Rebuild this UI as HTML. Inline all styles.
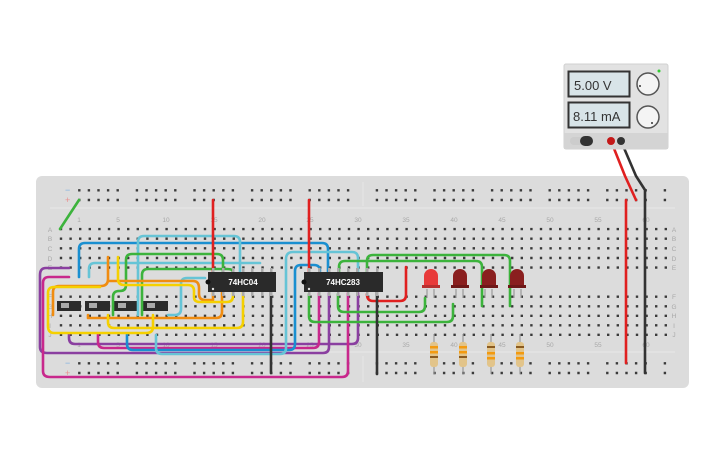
<!DOCTYPE html>
<html><head><meta charset="utf-8"><style>
html,body{margin:0;padding:0;background:#fff;width:725px;height:453px;overflow:hidden}
svg{display:block}
text{font-family:"Liberation Sans",sans-serif}
</style></head><body>
<svg width="725" height="453" viewBox="0 0 725 453" xmlns="http://www.w3.org/2000/svg">
<!-- board -->
<rect x="36" y="176" width="653" height="212" rx="6" fill="#dcdcdc"/>
<line x1="50" y1="208" x2="675" y2="208" stroke="#e8e8e8" stroke-width="1"/>
<line x1="50" y1="352" x2="675" y2="352" stroke="#e8e8e8" stroke-width="1"/>
<line x1="363" y1="182" x2="363" y2="206" stroke="#e6e6e6"/>
<line x1="363" y1="356" x2="363" y2="382" stroke="#e6e6e6"/>
<!-- rails -->
<g stroke="#3a3a3a" stroke-width="2.4" stroke-dasharray="2.4 7.2 2.4 7.2 2.4 7.2 2.4 7.2 2.4 16.8">
<line x1="78.1" y1="190.3" x2="363" y2="190.3"/><line x1="78.1" y1="200" x2="363" y2="200"/>
<line x1="78.1" y1="363.3" x2="363" y2="363.3"/><line x1="78.1" y1="373" x2="363" y2="373"/>
<line x1="375.7" y1="190.3" x2="667" y2="190.3"/><line x1="375.7" y1="200" x2="667" y2="200"/>
<line x1="375.7" y1="363.3" x2="667" y2="363.3"/><line x1="375.7" y1="373" x2="667" y2="373"/>
</g>
<text x="65" y="193" font-size="9" fill="#7fb0e0">−</text>
<text x="65" y="203" font-size="9" fill="#e89090">+</text>
<text x="65" y="366" font-size="9" fill="#7fb0e0">−</text>
<text x="65" y="376" font-size="9" fill="#e89090">+</text>
<!-- main holes -->
<g stroke="#3a3a3a" stroke-width="2.4" stroke-dasharray="2.4 7.2">
<line x1="59.8" y1="229.1" x2="668" y2="229.1"/><line x1="59.8" y1="238.7" x2="668" y2="238.7"/><line x1="59.8" y1="248.3" x2="668" y2="248.3"/><line x1="59.8" y1="258" x2="668" y2="258"/><line x1="59.8" y1="267.6" x2="668" y2="267.6"/>
<line x1="59.8" y1="296.7" x2="668" y2="296.7"/><line x1="59.8" y1="306.3" x2="668" y2="306.3"/><line x1="59.8" y1="315.8" x2="668" y2="315.8"/><line x1="59.8" y1="325.3" x2="668" y2="325.3"/><line x1="59.8" y1="334.8" x2="668" y2="334.8"/>
</g>
<!-- labels -->
<g font-size="6.5" fill="#a8a8a8" text-anchor="middle">
<text x="79" y="222">1</text><text x="118" y="222">5</text><text x="166" y="222">10</text><text x="214" y="222">15</text><text x="262" y="222">20</text><text x="310" y="222">25</text><text x="358" y="222">30</text><text x="406" y="222">35</text><text x="454" y="222">40</text><text x="502" y="222">45</text><text x="550" y="222">50</text><text x="598" y="222">55</text><text x="646" y="222">60</text>
<text x="79" y="347">1</text><text x="118" y="347">5</text><text x="166" y="347">10</text><text x="214" y="347">15</text><text x="262" y="347">20</text><text x="310" y="347">25</text><text x="358" y="347">30</text><text x="406" y="347">35</text><text x="454" y="347">40</text><text x="502" y="347">45</text><text x="550" y="347">50</text><text x="598" y="347">55</text><text x="646" y="347">60</text>
<text x="50" y="232">A</text><text x="50" y="241">B</text><text x="50" y="251">C</text><text x="50" y="261">D</text><text x="50" y="270">E</text>
<text x="50" y="299">F</text><text x="50" y="309">G</text><text x="50" y="318">H</text><text x="50" y="328">I</text><text x="50" y="337">J</text>
<text x="674" y="232">A</text><text x="674" y="241">B</text><text x="674" y="251">C</text><text x="674" y="261">D</text><text x="674" y="270">E</text>
<text x="674" y="299">F</text><text x="674" y="309">G</text><text x="674" y="318">H</text><text x="674" y="328">I</text><text x="674" y="337">J</text>
</g>
<!-- switches -->
<g>
<rect x="57" y="301" width="24" height="10" fill="#2b2b2b"/><rect x="61" y="303" width="8" height="5" fill="#aaa"/>
<rect x="85" y="301" width="25" height="10" fill="#2b2b2b"/><rect x="89" y="303" width="8" height="5" fill="#aaa"/>
<rect x="114" y="301" width="25" height="10" fill="#2b2b2b"/><rect x="118" y="303" width="8" height="5" fill="#aaa"/>
<rect x="143" y="301" width="25" height="10" fill="#2b2b2b"/><rect x="147" y="303" width="8" height="5" fill="#aaa"/>
</g>
<!-- wires -->
<g fill="none" stroke-width="2.6" stroke-linecap="round" stroke-linejoin="round">
<path stroke="#8a3fa0" d="M69 268 H46 Q40 268 40 275 V347 Q40 353 47 353 H323 Q329 353 329 347 V293"/>
<path stroke="#8a3fa0" d="M69 334 V338 Q69 344 75 344 H352 Q358 344 358 338 V293"/>
<path stroke="#c8288c" d="M69 277 H49 Q43 277 43 283 V371 Q43 377 50 377 H342 Q348 377 348 371 V293"/>
<path stroke="#c8288c" d="M98 334 V342 Q98 348 104 348 H313 Q319 348 319 342 V293"/>
<path stroke="#1a8fd0" d="M79 277 V249 Q79 243 85 243 H322 Q328 243 328 249 V272"/>
<path stroke="#1a8fd0" d="M127 334 V344 Q127 350 133 350 H289 Q295 350 295 344 V271 Q295 265 301 265 H314 Q320 265 320 271"/>
<path stroke="#66c4d6" d="M138 315 V242 Q138 236 144 236 H234 Q240 236 240 242 V272"/>
<path stroke="#66c4d6" d="M89 277 V269 Q89 263 95 263 H260"/>
<path stroke="#66c4d6" d="M168 315 H175 Q181 315 181 309 V284 Q181 278 187 278 H205"/>
<path stroke="#66c4d6" d="M156 335 V348 Q156 354 162 354 H280 Q286 354 286 348 V259 Q286 252 293 252 H352 Q358 252 358 258 V272"/>
<path stroke="#3cb33c" d="M60 229 L79 200"/>
<path stroke="#3cb33c" d="M113 315 V297 Q113 291 119 291 H120 Q126 291 126 285 V260 Q126 254 132 254 H217 Q223 254 223 260 V272"/>
<path stroke="#3cb33c" d="M142 315 V275 Q142 269 148 269 H227 Q233 269 233 272"/>
<path stroke="#3cb33c" d="M367 272 V261 Q367 255 373 255 H504 Q510 255 510 261 V306"/>
<path stroke="#3cb33c" d="M339 272 V267 Q339 261 345 261 H476 Q482 261 482 267 V306"/>
<path stroke="#3cb33c" d="M309 294 V316 Q309 322 315 322 H447 Q453 322 453 316 V304"/>
<path stroke="#3cb33c" d="M338 294 V306 Q338 312 344 312 H419 Q425 312 425 306 V298"/>
<path stroke="#e02020" d="M406 267 V295 Q406 301 400 301 H373 Q367 301 367 294"/>
<path stroke="#e02020" d="M213 200 V272"/>
<path stroke="#e02020" d="M309 200 V272"/>
<path stroke="#f08c10" d="M108 257 V279 Q108 286 101 286 H59 Q53 286 53 292 V315"/>
<path stroke="#f08c10" d="M108 281 H193 Q199 281 199 288 V294 Q199 300 205 300 H213 V292"/>
<path stroke="#f08c10" d="M88 315 V318 H216 Q222 318 222 312 V292"/>
<path stroke="#f5d000" d="M118 257 V279 Q118 285 124 285 H188 Q194 285 194 291 V297 Q194 302 200 302 H227 Q233 302 233 296 V292"/>
<path stroke="#f5d000" d="M153 315 V327 Q153 333 146 333 H54 Q48 333 48 326 V293 Q48 287 54 287 H100"/>
<path stroke="#f5d000" d="M108 315 V322 Q108 328 114 328 H237 Q243 328 243 322 V292"/>
<path stroke="#333" d="M271 292 V373"/>
<path stroke="#333" d="M377 292 V374"/>
<path stroke="#e02020" d="M626 200 V363"/>
<path stroke="#e02020" d="M611 141 L625 176 L636 200"/>
<path stroke="#333" d="M621 141 L636 176 L645 190 V373"/>
</g>
<!-- chips -->
<g fill="#aaa">
<rect x="212" y="268" width="2.5" height="4"/><rect x="222" y="268" width="2.5" height="4"/><rect x="232" y="268" width="2.5" height="4"/><rect x="242" y="268" width="2.5" height="4"/><rect x="251" y="268" width="2.5" height="4"/><rect x="261" y="268" width="2.5" height="4"/><rect x="270" y="268" width="2.5" height="4"/>
<rect x="212" y="292" width="2.5" height="4"/><rect x="222" y="292" width="2.5" height="4"/><rect x="232" y="292" width="2.5" height="4"/><rect x="242" y="292" width="2.5" height="4"/><rect x="251" y="292" width="2.5" height="4"/><rect x="261" y="292" width="2.5" height="4"/><rect x="270" y="292" width="2.5" height="4"/>
<rect x="308" y="268" width="2.5" height="4"/><rect x="318" y="268" width="2.5" height="4"/><rect x="328" y="268" width="2.5" height="4"/><rect x="337" y="268" width="2.5" height="4"/><rect x="347" y="268" width="2.5" height="4"/><rect x="356" y="268" width="2.5" height="4"/><rect x="366" y="268" width="2.5" height="4"/><rect x="376" y="268" width="2.5" height="4"/>
<rect x="308" y="292" width="2.5" height="4"/><rect x="318" y="292" width="2.5" height="4"/><rect x="328" y="292" width="2.5" height="4"/><rect x="337" y="292" width="2.5" height="4"/><rect x="347" y="292" width="2.5" height="4"/><rect x="356" y="292" width="2.5" height="4"/><rect x="366" y="292" width="2.5" height="4"/><rect x="376" y="292" width="2.5" height="4"/>
</g>
<rect x="208" y="272" width="68" height="20" fill="#2a2a2a"/>
<circle cx="208" cy="282" r="2.5" fill="#111"/><circle cx="213" cy="289" r="1.2" fill="#ddd"/>
<text x="243" y="285" font-family="Liberation Mono,monospace" font-size="8" font-weight="bold" fill="#fff" text-anchor="middle">74HC04</text>
<rect x="304" y="272" width="79" height="20" fill="#2a2a2a"/>
<circle cx="304" cy="282" r="2.5" fill="#111"/><circle cx="309" cy="289" r="1.2" fill="#ddd"/>
<text x="343" y="285" font-family="Liberation Mono,monospace" font-size="8" font-weight="bold" fill="#fff" text-anchor="middle">74HC283</text>
<!-- LEDs -->
<g stroke="#999" stroke-width="1.2">
<line x1="427" y1="289" x2="427" y2="298"/><line x1="434" y1="289" x2="434" y2="298"/>
<line x1="456" y1="289" x2="456" y2="298"/><line x1="463" y1="289" x2="463" y2="298"/>
<line x1="485" y1="289" x2="485" y2="298"/><line x1="492" y1="289" x2="492" y2="298"/>
<line x1="514" y1="289" x2="514" y2="298"/><line x1="521" y1="289" x2="521" y2="298"/>
</g>
<path d="M424 287 V276 A7 7 0 0 1 438 276 V287 Z" fill="#e83a3a"/><rect x="422" y="285" width="18" height="3" fill="#b83030"/>
<path d="M453 287 V276 A7 7 0 0 1 467 276 V287 Z" fill="#8a1f1f"/><rect x="451" y="285" width="18" height="3" fill="#6e1818"/>
<path d="M482 287 V276 A7 7 0 0 1 496 276 V287 Z" fill="#8a1f1f"/><rect x="480" y="285" width="18" height="3" fill="#6e1818"/>
<path d="M510 287 V276 A7 7 0 0 1 524 276 V287 Z" fill="#8a1f1f"/><rect x="508" y="285" width="18" height="3" fill="#6e1818"/>
<!-- resistors -->
<g stroke="#999" stroke-width="1.2">
<line x1="434" y1="334" x2="434" y2="374"/><line x1="463" y1="334" x2="463" y2="374"/><line x1="491" y1="334" x2="491" y2="374"/><line x1="520" y1="334" x2="520" y2="374"/>
</g>
<g>
<rect x="430" y="342" width="8" height="25" rx="3" fill="#e2c48a"/><rect x="430" y="346" width="8" height="2.5" fill="#f39a10"/><rect x="430" y="351" width="8" height="2.5" fill="#f39a10"/><rect x="430" y="356" width="8" height="2" fill="#8a5a20"/>
<rect x="459" y="342" width="8" height="25" rx="3" fill="#e2c48a"/><rect x="459" y="346" width="8" height="2.5" fill="#f39a10"/><rect x="459" y="351" width="8" height="2.5" fill="#f39a10"/><rect x="459" y="356" width="8" height="2" fill="#8a5a20"/>
<rect x="487" y="342" width="8" height="25" rx="3" fill="#e2c48a"/><rect x="487" y="346" width="8" height="2" fill="#8a5a20"/><rect x="487" y="352" width="8" height="2.5" fill="#f39a10"/><rect x="487" y="357" width="8" height="2.5" fill="#f39a10"/>
<rect x="516" y="342" width="8" height="25" rx="3" fill="#e2c48a"/><rect x="516" y="346" width="8" height="2" fill="#8a5a20"/><rect x="516" y="352" width="8" height="2.5" fill="#f39a10"/><rect x="516" y="357" width="8" height="2.5" fill="#f39a10"/>
</g>
<!-- power supply -->
<rect x="564" y="64" width="104" height="85" rx="2" fill="#e2e2e2" stroke="#d0d0d0"/>
<rect x="564" y="133" width="104" height="16" fill="#d4d4d4"/>
<rect x="568.5" y="71.5" width="61" height="25" fill="#d8e4e8" stroke="#333" stroke-width="2"/>
<rect x="568.5" y="102.5" width="61" height="25" fill="#d8e4e8" stroke="#333" stroke-width="2"/>
<text x="574" y="90" font-size="13" fill="#333">5.00 V</text>
<text x="573" y="121" font-size="13" fill="#333">8.11 mA</text>
<circle cx="648" cy="84" r="11" fill="#f4f4f4" stroke="#555" stroke-width="1.5"/><circle cx="640" cy="86" r="1" fill="#333"/>
<circle cx="648" cy="117" r="11" fill="#f4f4f4" stroke="#555" stroke-width="1.5"/><circle cx="652" cy="123" r="1" fill="#333"/>
<circle cx="659" cy="71" r="1.5" fill="#3c3"/>
<rect x="570" y="137" width="23" height="8" rx="4" fill="#ccc"/><rect x="580" y="136" width="13" height="10" rx="5" fill="#333"/>
<circle cx="611" cy="141" r="4" fill="#c41818"/><circle cx="621" cy="141" r="4" fill="#333"/>
</svg>
</body></html>
